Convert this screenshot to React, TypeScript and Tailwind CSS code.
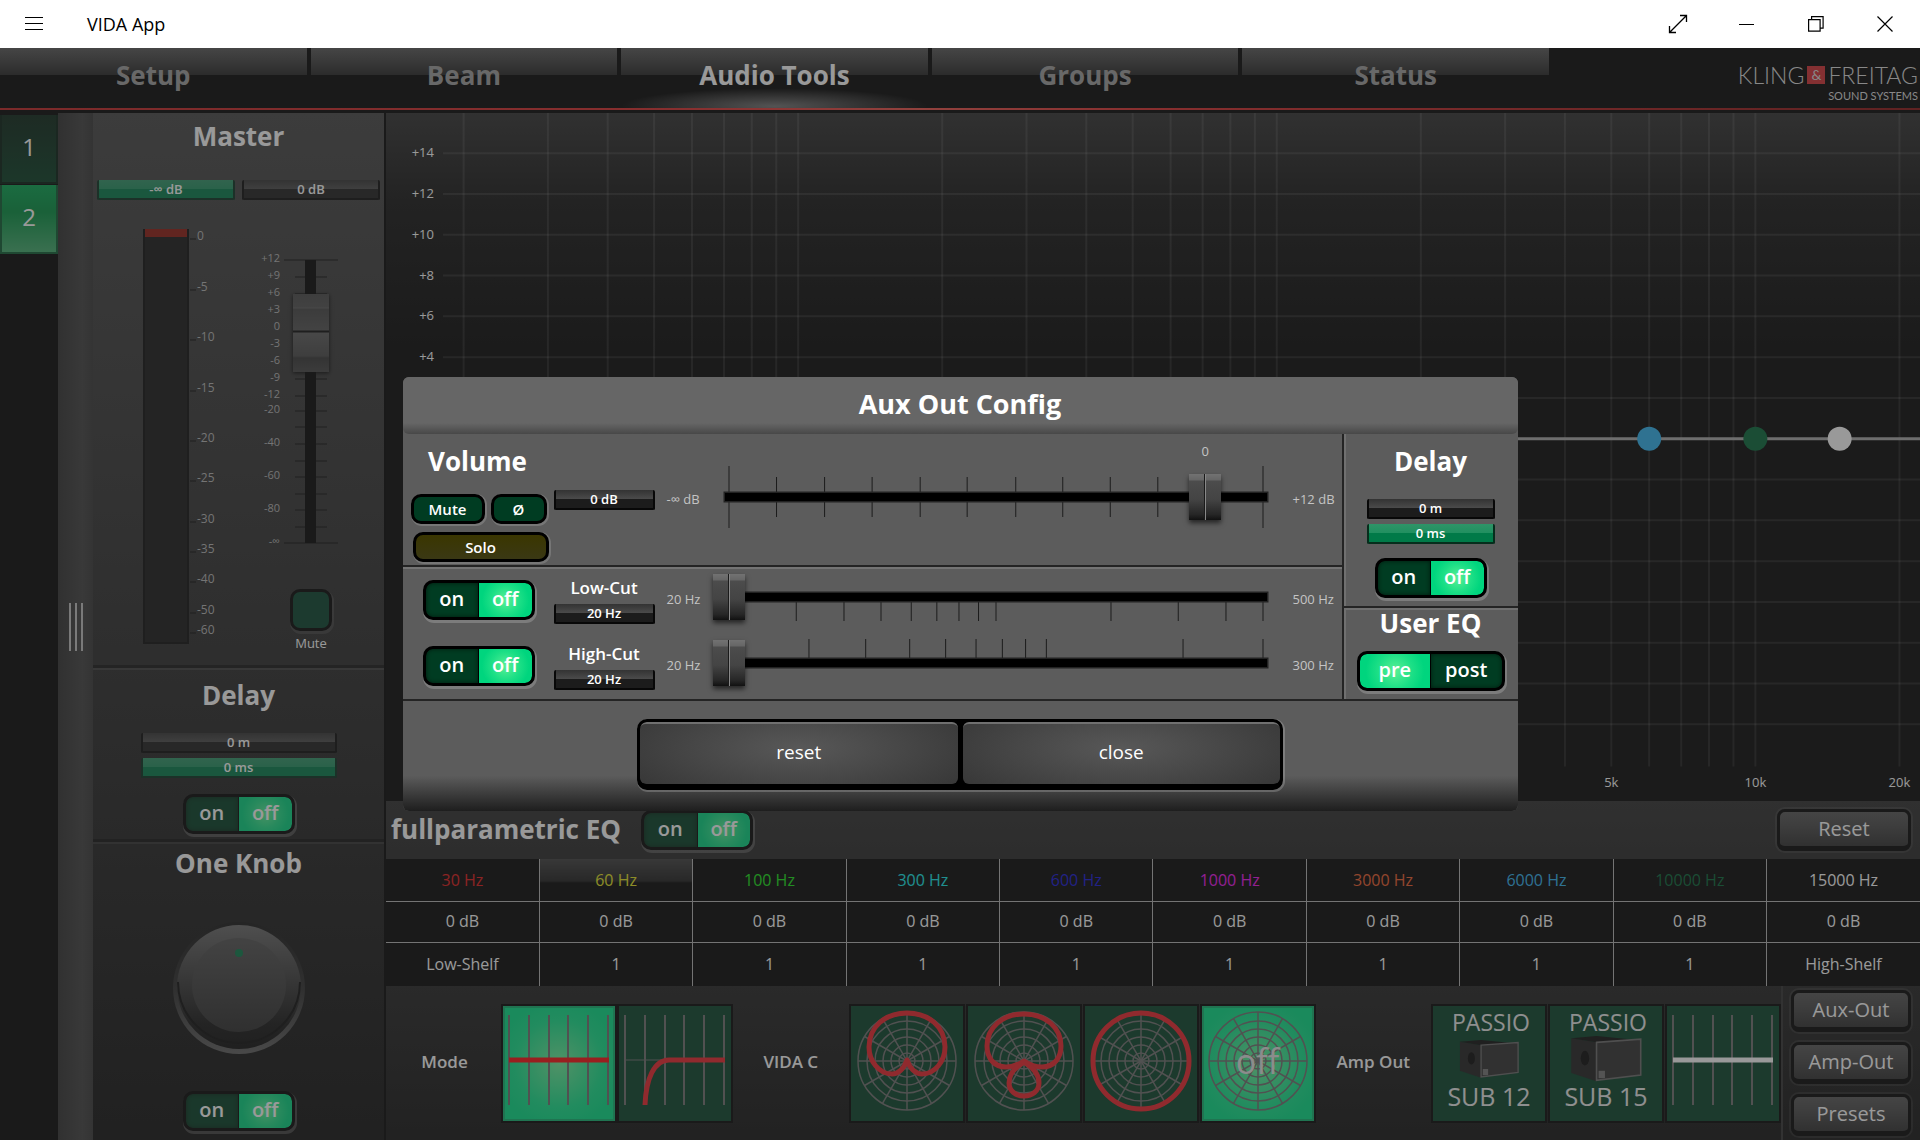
import React, { useState } from 'react';
import clsx from 'clsx';

const TABS = ['Setup', 'Beam', 'Audio Tools', 'Groups', 'Status'];

const BANDS = [
  { freq: '30 Hz', gain: '0 dB', q: 'Low-Shelf', color: 'text-[#e21414]' },
  { freq: '60 Hz', gain: '0 dB', q: '1', color: 'text-[#e4e41c]' },
  { freq: '100 Hz', gain: '0 dB', q: '1', color: 'text-[#12e412]' },
  { freq: '300 Hz', gain: '0 dB', q: '1', color: 'text-[#0ceaea]' },
  { freq: '600 Hz', gain: '0 dB', q: '1', color: 'text-[#1010d8]' },
  { freq: '1000 Hz', gain: '0 dB', q: '1', color: 'text-[#f00cf0]' },
  { freq: '3000 Hz', gain: '0 dB', q: '1', color: 'text-[#f05a28]' },
  { freq: '6000 Hz', gain: '0 dB', q: '1', color: 'text-[#2ab0ee]' },
  { freq: '10000 Hz', gain: '0 dB', q: '1', color: 'text-[#026636]' },
  { freq: '15000 Hz', gain: '0 dB', q: 'High-Shelf', color: 'text-white' },
];

const METER_SCALE: [string, number][] = [
  ['0', 7], ['-5', 58], ['-10', 108], ['-15', 159], ['-20', 209], ['-25', 249],
  ['-30', 290], ['-35', 320], ['-40', 350], ['-50', 381], ['-60', 401],
];

const FADER_SCALE: [string, number][] = [
  ['+12', 0], ['+9', 17], ['+6', 34], ['+3', 51], ['0', 68], ['-3', 85], ['-6', 102], ['-9', 119],
  ['-12', 136], ['-20', 151], ['', 167], ['-40', 184], ['', 201], ['-60', 217], ['', 234],
  ['-80', 250], ['', 267], ['-∞', 283],
];

/* ---------- small controls ---------- */

const Heading = ({ children }: { children: React.ReactNode }) => (
  <h2 className="pb-[2px] text-center text-[26px] leading-[30px] font-bold text-white">{children}</h2>
);

const Toggle = ({ options = ['on', 'off'], initial = 1, wide = false, label }: {
  options?: string[]; initial?: number; wide?: boolean; label: string;
}) => {
  const [active, setActive] = useState(initial);
  return (
    <div
      role="group"
      aria-label={label}
      className={clsx(
        'grid h-10 grid-cols-2 gap-px overflow-hidden rounded-[10px] border-[3px] border-black bg-black shadow-[1px_2px_0_1px_rgba(255,255,255,0.2)]',
        wide ? 'w-[148px]' : 'w-28'
      )}
    >
      {options.map((option, i) => (
        <button
          key={option}
          aria-pressed={i === active}
          onClick={() => setActive(i)}
          className={clsx(
            'flex items-center justify-center pb-[2px] text-xl leading-6 font-semibold text-white',
            i === 0 ? 'rounded-l-[7px]' : 'rounded-r-[7px]',
            i === active
              ? 'bg-[radial-gradient(circle,#5af094_0%,#1cdf86_45%,#00d57e_75%)]'
              : 'bg-[#003c22] shadow-[inset_0_0_4px_#001a0e]'
          )}
        >
          {option}
        </button>
      ))}
    </div>
  );
};

const ValueField = ({ value, label, green, className }: {
  value: string; label: string; green?: boolean; className?: string;
}) => (
  <input
    type="text"
    aria-label={label}
    defaultValue={value}
    className={clsx(
      'block h-5 rounded-[2px] border-x-2 border-b-2 text-center text-[13px] leading-4 font-semibold text-white outline-none',
      green
        ? 'border-[#052e1c] bg-[linear-gradient(#2f9468_0%,#219060_48%,#007a48_52%,#007a48_100%)]'
        : 'border-[#080808] bg-[linear-gradient(#333_0%,#4a4a4a_48%,#1c1c1c_52%,#1c1c1c_100%)]',
      className
    )}
  />
);

const SteelButton = ({ children }: { children: React.ReactNode }) => (
  <button className="h-[42px] w-full rounded-lg border-[3px] border-b-[5px] border-black bg-[linear-gradient(#565656,#484848_40%,#2e2e2e)] pb-px text-xl leading-6 text-white shadow-[0_0_0_2px_rgba(255,255,255,0.08)]">
    {children}
  </button>
);

const PillButton = ({ children, className }: { children: React.ReactNode; className?: string }) => (
  <button
    className={clsx(
      'flex h-[30px] items-center justify-center rounded-[10px] border-[3px] border-black pb-px text-[15px] leading-5 font-semibold text-white shadow-[1px_1px_0_1px_rgba(255,255,255,0.16)]',
      className
    )}
  >
    {children}
  </button>
);

const HSlider = ({ label, ticks, ends, side = 'both', value, mark }: {
  label: string; ticks: number[]; ends?: boolean; side?: 'both' | 'above' | 'below'; value: number; mark?: string;
}) => (
  <div className="mb-[6px] grid h-14 grid-cols-1">
    <svg className="col-start-1 row-start-1 mx-4 h-14 w-[calc(100%-32px)] overflow-visible" aria-hidden="true">
      {ticks.map((t, i) => {
        const end = ends && (i === 0 || i === ticks.length - 1);
        const reach = end ? 31 : 20;
        return (
          <line
            key={t}
            x1={`${t * 100}%`}
            x2={`${t * 100}%`}
            y1={side === 'below' ? 28 : side === 'above' ? 4 : 28 - reach}
            y2={side === 'above' ? 28 : side === 'below' ? 52 : 28 + reach}
            stroke="#1c1c1c"
          />
        );
      })}
      <line x1="0" x2="100%" y1="28" y2="28" stroke="#222" strokeWidth="11" strokeLinecap="square" />
      <line x1="0" x2="100%" y1="28" y2="28" stroke="#000" strokeWidth="8" strokeLinecap="square" />
      {mark && (
        <text x={`${value}%`} y="-13" textAnchor="middle" fontSize="13" fill="#c4c4c4">{mark}</text>
      )}
    </svg>
    <input
      type="range"
      min={0}
      max={100}
      step={0.1}
      defaultValue={value}
      aria-label={label}
      className="z-10 col-start-1 row-start-1 h-14 w-full cursor-pointer appearance-none bg-transparent [&::-webkit-slider-thumb]:h-[46px] [&::-webkit-slider-thumb]:w-8 [&::-webkit-slider-thumb]:appearance-none [&::-webkit-slider-thumb]:bg-[linear-gradient(90deg,transparent_0_15px,#1a1a1a_15px_16px,#888_16px_17px,transparent_17px),linear-gradient(#727272_0,#666_6px,#4c4c4c_7px,#444_55%,#262626_88%,#111)] [&::-webkit-slider-thumb]:shadow-[0_3px_5px_rgba(0,0,0,0.6)]"
    />
  </div>
);

/* ---------- window chrome ---------- */

const TitleBar = () => (
  <header className="flex h-12 shrink-0 items-center bg-white text-black">
    <button aria-label="Menu" className="flex h-full w-[68px] items-center justify-center">
      <svg width="18" height="16" stroke="currentColor" shapeRendering="crispEdges">
        <path d="M0 1.5h18M0 7.5h18M0 13.5h18" />
      </svg>
    </button>
    <h1 className="flex-1 pl-[19px] text-[18px] leading-6 font-normal">VIDA App</h1>
    <div className="flex h-full pr-px [&>button]:flex [&>button]:w-[69px] [&>button]:items-center [&>button]:justify-center">
      <button aria-label="Full screen">
        <svg width="20" height="20" fill="none" stroke="currentColor" strokeWidth="1.3">
          <path d="M1.5 18.5L18.5 1.5M12 1.5h6.5v6.5M1.5 12v6.5h6.5" />
        </svg>
      </button>
      <button aria-label="Minimize">
        <svg width="16" height="16" stroke="currentColor" shapeRendering="crispEdges"><path d="M0 8.5h15" /></svg>
      </button>
      <button aria-label="Restore">
        <svg width="16" height="16" fill="none" stroke="currentColor" strokeWidth="1.2">
          <path d="M.6 3.6h11.5v11.5H.6zM3.6 3.6V.6h11.5v11.5h-3" />
        </svg>
      </button>
      <button aria-label="Close">
        <svg width="16" height="16" stroke="currentColor" strokeWidth="1.2"><path d="M.5.5l15 15M15.5.5l-15 15" /></svg>
      </button>
    </div>
  </header>
);

const NavBar = () => (
  <nav className="relative flex h-[65px] shrink-0 items-start bg-black">
    <div className="grid h-[60px] flex-1 grid-cols-5 gap-1">
      {TABS.map((tab) => (
        <a
          key={tab}
          href="#"
          className={clsx(
            'flex items-center justify-center pb-[6px] text-[26px] leading-8 font-bold',
            tab === 'Audio Tools'
              ? 'bg-[radial-gradient(ellipse_50%_30%_at_50%_97%,#747474,transparent),linear-gradient(#585858,#242424_27px,transparent_27px)] text-white'
              : 'bg-[linear-gradient(#585858,#242424_27px,transparent_27px)] text-[#9c9c9c]'
          )}
        >
          {tab}
        </a>
      ))}
    </div>
    <div className="flex w-[371px] flex-col items-end pt-3 pr-[2px] font-['Lato','Open_Sans',sans-serif] text-[#dcdcdc]">
      <div className="flex items-center gap-[3px] text-[23px] leading-[30px] font-light">
        <span>KLING</span>
        <span className="flex h-[18px] w-[18px] items-center justify-center bg-[#d42c30] text-sm leading-4 font-normal">&amp;</span>
        <span>FREITAG</span>
      </div>
      <span className="text-[11px] leading-3">SOUND SYSTEMS</span>
    </div>
    <div className="absolute inset-x-0 top-[60px] h-[2px] bg-[linear-gradient(90deg,#c22020,#dc2a2a_35%,#f05048_48%,#dc2a2a_60%,#8a1010)]" />
  </nav>
);

/* ---------- left column ---------- */

const LevelMeter = () => (
  <svg width="76" height="416" className="overflow-visible" role="img" aria-label="Level meter">
    <rect x="1" y="1" width="44" height="413" fill="#141414" stroke="#0a0a0a" strokeWidth="2" />
    <rect x="2" y="0" width="42" height="8" fill="#8e160c" />
    {METER_SCALE.map(([text, y]) => (
      <g key={text}>
        <line x1="47" x2="53" y1={y + 3} y2={y + 3} stroke="#0a0a0a" />
        <text x="54" y={y + 4} fontSize="12" fill="#b4b4b4">{text}</text>
      </g>
    ))}
  </svg>
);

const MasterFader = () => (
  <div className="grid h-[364px] w-[84px] grid-cols-1">
    <svg className="col-start-1 row-start-1 h-full w-full overflow-visible" aria-hidden="true">
      {FADER_SCALE.map(([text, y], i) => {
        const reach = i === 0 || i === FADER_SCALE.length - 1 ? 27 : 16;
        return (
          <g key={y}>
            <line x1={56 - reach} x2={56 + reach} y1={y + 40} y2={y + 40} stroke="#0c0c0c" />
            <text x="25" y={y + 42} textAnchor="end" fontSize="11" fill="#b4b4b4">{text}</text>
          </g>
        );
      })}
      <rect x="50" y="40" width="11" height="283" fill="#000" />
    </svg>
    <input
      type="range"
      min={0}
      max={100}
      defaultValue={74}
      aria-label="Master volume"
      className="col-start-1 row-start-1 ml-[38px] h-full w-9 cursor-pointer appearance-none bg-transparent [direction:rtl] [writing-mode:vertical-lr] [&::-webkit-slider-thumb]:h-[78px] [&::-webkit-slider-thumb]:w-9 [&::-webkit-slider-thumb]:appearance-none [&::-webkit-slider-thumb]:bg-[linear-gradient(#484848_0,#505050_13px,#5e5e5e_14px,#444_15px,#525252_36px,#0a0a0a_37px,#0a0a0a_38px,#5c5c5c_39px,#484848_62px,#343434_64px,#444_78px)] [&::-webkit-slider-thumb]:shadow-[0_1px_4px_#000]"
    />
  </div>
);

const Knob = () => (
  <svg width="136" height="136" viewBox="-68 -68 136 136" role="img" aria-label="One Knob">
    <defs>
      <linearGradient id="rim" x1="0" y1="0" x2="0" y2="1">
        <stop offset="0" stopColor="#161616" />
        <stop offset="0.5" stopColor="#2c2c2c" />
        <stop offset="1" stopColor="#5e5e5e" />
      </linearGradient>
      <linearGradient id="skirt" x1="0" y1="0" x2="0" y2="1">
        <stop offset="0" stopColor="#6a6a6a" />
        <stop offset="0.45" stopColor="#3a3a3a" />
        <stop offset="0.8" stopColor="#141414" />
        <stop offset="1" stopColor="#0c0c0c" />
      </linearGradient>
      <linearGradient id="cap" x1="0" y1="0" x2="0" y2="1">
        <stop offset="0" stopColor="#525252" />
        <stop offset="1" stopColor="#2c2c2c" />
      </linearGradient>
    </defs>
    <circle r="66" fill="url(#rim)" />
    <circle cy="-1" r="62" fill="url(#skirt)" />
    <path d="M-61 -6A61 61 0 0 0 61 -6" fill="none" stroke="#0a0a0a" strokeWidth="2" />
    <circle cy="-3" r="47" fill="url(#cap)" />
    <circle cy="-35" r="4" fill="#067a48" />
  </svg>
);

const Sidebar = () => (
  <aside className="flex w-[293px] shrink-0 flex-col border-r-2 border-black bg-[linear-gradient(#444,#323232_35%,#222_65%,#0e0e0e)]">
    <section className="flex flex-1 flex-col border-b-[3px] border-[#141414] shadow-[0_2px_0_#3c3c3c]">
      <div className="pt-2"><Heading>Master</Heading></div>
      <div className="flex gap-[7px] px-1 pt-[27px]">
        <ValueField value="-∞ dB" label="Master level" green className="w-full" />
        <ValueField value="0 dB" label="Master gain" className="w-full" />
      </div>
      <div className="flex gap-9 pt-[29px] pl-[50px]">
        <LevelMeter />
        <div className="flex flex-col items-start">
          <div className="-mt-[9px]"><MasterFader /></div>
          <div className="flex w-[112px] flex-col items-center gap-1 pt-[5px]">
            <button
              aria-labelledby="master-mute"
              className="h-[42px] w-[42px] rounded-[10px] border-[3px] border-black bg-[#04402a] shadow-[1px_2px_0_1px_rgba(255,255,255,0.1)]"
            />
            <span id="master-mute" className="text-[13px] leading-4 text-white">Mute</span>
          </div>
        </div>
      </div>
    </section>
    <section className="flex h-[174px] flex-col items-center border-b-[3px] border-[#101010] pt-3 shadow-[0_2px_0_#303030]">
      <Heading>Delay</Heading>
      <div className="flex flex-col gap-[5px] pt-[21px] pb-4">
        <ValueField value="0 m" label="Delay distance" className="w-[196px]" />
        <ValueField value="0 ms" label="Delay time" green className="w-[196px]" />
      </div>
      <Toggle label="Delay" />
    </section>
    <section className="flex h-[298px] flex-col items-center pt-[6px]">
      <Heading>One Knob</Heading>
      <div className="pt-10 pb-[35px]"><Knob /></div>
      <Toggle label="One Knob" />
    </section>
  </aside>
);

/* ---------- EQ graph ---------- */

// 20 Hz sits at 5.06 % of the width, one decade takes 31.2 %
const freqX = (hz: number) => 5.06 + 31.2 * Math.log10(hz / 20);
const gainY = (db: number) => 47.35 - 2.965 * db;

const GRID_FREQS = [
  20, 30, 40, 50, 60, 70, 80, 90, 100, 200, 300, 400, 500, 600, 700, 800, 900,
  1000, 2000, 3000, 4000, 5000, 6000, 7000, 8000, 9000, 10000, 20000,
];
const GRID_GAINS = [14, 12, 10, 8, 6, 4, 2, 0, -2, -4, -6, -8, -10, -12, -14];

const EqGraph = () => (
  <div className="min-h-0 flex-1 bg-[linear-gradient(#2e2e2e,#121212_13%,#020202_35%)]">
    <svg className="block h-full w-full" role="img" aria-label="EQ curve">
      {GRID_FREQS.map((hz) => (
        <line key={hz} x1={`${freqX(hz)}%`} x2={`${freqX(hz)}%`} y1="0" y2="95%" stroke="#fff" strokeOpacity="0.1" strokeWidth="2" />
      ))}
      {GRID_GAINS.map((db) => (
        <line key={db} x1="57" x2="100%" y1={`${gainY(db)}%`} y2={`${gainY(db)}%`} stroke="#fff" strokeOpacity="0.1" strokeWidth="2" />
      ))}
      {[14, 12, 10, 8, 6, 4].map((db) => (
        <text key={db} x="48" y={`${gainY(db)}%`} dy="4" textAnchor="end" fontSize="13" fill="#fff">{`+${db}`}</text>
      ))}
      <line x1="57" x2="100%" y1={`${gainY(0)}%`} y2={`${gainY(0)}%`} stroke="#a8a8a8" strokeWidth="3" />
      <circle cx={`${freqX(6000)}%`} cy={`${gainY(0)}%`} r="12" fill="#2ab0ee" />
      <circle cx={`${freqX(10000)}%`} cy={`${gainY(0)}%`} r="12" fill="#026636" />
      <circle cx={`${freqX(15000)}%`} cy={`${gainY(0)}%`} r="12" fill="#fff" />
      {[5, 10, 20].map((k) => (
        <text key={k} x={`${freqX(k * 1000)}%`} y="98%" textAnchor="middle" fontSize="13" fill="#fff">{`${k}k`}</text>
      ))}
    </svg>
  </div>
);

const BandTable = () => (
  <table className="w-full table-fixed border-collapse bg-black text-base leading-5 text-white">
    <thead>
      <tr className="h-[42px]">
        {BANDS.map((band, i) => (
          <th
            key={band.freq}
            scope="col"
            className={clsx(
              'border-r border-b border-[#b4b4b4] font-normal last:border-r-0',
              band.color,
              i === 1 && 'bg-[linear-gradient(#3c3c3c,#1c1c1c_22px,#000_24px)]'
            )}
          >
            {band.freq}
          </th>
        ))}
      </tr>
    </thead>
    <tbody>
      <tr className="h-[41px]">
        {BANDS.map((band) => (
          <td key={band.freq} className="border-r border-b border-[#b4b4b4] pb-[2px] text-center last:border-r-0">{band.gain}</td>
        ))}
      </tr>
      <tr className="h-11">
        {BANDS.map((band) => (
          <td key={band.freq} className="border-r border-[#b4b4b4] text-center last:border-r-0">{band.q}</td>
        ))}
      </tr>
    </tbody>
  </table>
);

/* ---------- mode tiles ---------- */

const Tile = ({ label, active, children }: { label: string; active?: boolean; children: React.ReactNode }) => (
  <button
    aria-label={label}
    aria-pressed={!!active}
    className={clsx(
      'flex h-[115px] w-28 flex-col items-center justify-center pb-1 shadow-[0_0_0_2px_#000]',
      active
        ? 'bg-[radial-gradient(circle,#6cf09a_0%,#10e48a_55%,#00e084_80%)] ring-2 ring-[#0cb46e] ring-inset'
        : 'bg-[#044026]'
    )}
  >
    {children}
  </button>
);

const GridLines = ({ curve, color, width = 5 }: { curve: string; color: string; width?: number }) => (
  <svg width="108" height="108" viewBox="0 0 108 108" fill="none">
    {[4, 24, 44, 63, 83, 103].map((x) => (
      <line key={x} x1={x} x2={x} y1="8" y2="98" stroke="#6e6e6e" strokeWidth="2" />
    ))}
    <line x1="4" x2="104" y1="53" y2="53" stroke="#6e6e6e" />
    <path d={curve} stroke={color} strokeWidth={width} />
  </svg>
);

const Polar = ({ paths = [], circle }: { paths?: string[]; circle?: boolean }) => (
  <svg width="108" height="108" viewBox="-54 -54 108 108" fill="none" className="col-start-1 row-start-1">
    {[8, 16, 24, 32, 40, 49].map((r) => (
      <circle key={r} r={r} stroke="#6e6e6e" strokeWidth="1.5" />
    ))}
    {[0, 30, 60, 90, 120, 150].map((deg) => (
      <line key={deg} x1="-49" x2="49" transform={`rotate(${deg})`} stroke="#6e6e6e" strokeWidth="1.5" />
    ))}
    {paths.map((d) => (
      <path key={d} d={d} stroke="#ec2028" strokeWidth="5" strokeLinejoin="round" />
    ))}
    {circle && <circle r="48" stroke="#ec2028" strokeWidth="5" />}
  </svg>
);

const CARDIOID = ['M0 -1C-3 8 -9 13 -15 13C-28 13 -38 0 -38 -14C-38 -34 -22 -48 0 -48C22 -48 38 -34 38 -14C38 0 28 13 15 13C9 13 3 8 0 -1Z'];
const HYPER = [
  'M0 0C-6 4 -12 6 -18 6C-30 6 -37 -3 -37 -15C-37 -33 -22 -47 0 -47C22 -47 37 -33 37 -15C37 -3 30 6 18 6C12 6 6 4 0 0Z',
  'M0 1C-10 7 -15 14 -15 22C-15 30 -8 35 0 35C8 35 15 30 15 22C15 14 10 7 0 1Z',
];

const SubIcon = ({ size }: { size: number }) => (
  <svg width={size} height={size * 0.64} viewBox="0 0 70 45">
    <path d="M2 3L26 7V44L2 36Z" fill="#1e1e1e" />
    <path d="M2 3L26 1L67 5L26 7Z" fill="#0c0c0c" />
    <path d="M26 7L68 4V38L26 43Z" fill="#2e2e2e" stroke="#6a6a6a" strokeWidth="1.5" />
    <ellipse cx="15" cy="22" rx="4" ry="7" fill="#060606" />
    <rect x="28" y="34" width="6" height="7" fill="#747474" />
  </svg>
);

const SubTile = ({ model, size }: { model: string; size: number }) => (
  <Tile label={`PASSIO ${model}`}>
    <span className="pl-1 text-[23px] leading-7 text-[#eaeaea]">PASSIO</span>
    <span className="flex h-[46px] items-center"><SubIcon size={size} /></span>
    <span className="pb-1 text-[25px] leading-7 text-[#eaeaea]">{model}</span>
  </Tile>
);

const ModeLabel = ({ children, className = 'flex-1' }: { children: React.ReactNode; className?: string }) => (
  <span className={clsx('pb-[2px] text-center text-[17px] leading-5 font-semibold text-white', className)}>{children}</span>
);

const ModeRow = () => (
  <div className="flex h-[154px] bg-[linear-gradient(#202020,#101010)]">
    <div className="flex flex-1 items-center">
      <ModeLabel className="w-[117px]">Mode</ModeLabel>
      <div className="flex gap-1">
        <Tile label="Flat" active><GridLines curve="M4 53H104" color="#ff0a0a" /></Tile>
        <Tile label="High pass"><GridLines curve="M24 98C25 72 33 53 48 53H104" color="#ec2028" /></Tile>
      </div>
      <ModeLabel>VIDA C</ModeLabel>
      <div className="flex gap-[5px]">
        <Tile label="Cardioid"><Polar paths={CARDIOID} /></Tile>
        <Tile label="Hypercardioid"><Polar paths={HYPER} /></Tile>
        <Tile label="Omni"><Polar circle /></Tile>
        <Tile label="VIDA C off" active>
          <span className="grid place-items-center">
            <Polar />
            <span className="col-start-1 row-start-1 text-[34px] leading-9 text-[#e4e4e4]">off</span>
          </span>
        </Tile>
      </div>
      <ModeLabel>Amp Out</ModeLabel>
      <div className="flex gap-[5px]">
        <SubTile model="SUB 12" size={62} />
        <SubTile model="SUB 15" size={74} />
        <Tile label="Amp out flat"><GridLines curve="M4 53H104" color="#fff" /></Tile>
      </div>
    </div>
    <div className="ml-[2px] flex w-[139px] flex-col justify-between border-l-2 border-[#303030] py-1 pr-[9px] pl-2">
      <SteelButton>Aux-Out</SteelButton>
      <SteelButton>Amp-Out</SteelButton>
      <SteelButton>Presets</SteelButton>
    </div>
  </div>
);

/* ---------- dialog ---------- */

const logTicks = (max: number) =>
  [30, 40, 50, 60, 70, 80, 90, 100, 200, 300, 400, 500]
    .filter((hz) => hz <= max)
    .map((hz) => Math.log(hz / 20) / Math.log(max / 20));

const VOLUME_TICKS = [0, 0.089, 0.179, 0.268, 0.358, 0.446, 0.537, 0.625, 0.714, 0.803, 0.892, 1];

const ROW = 'grid grid-cols-[151px_101px_58px_1fr_63px] items-center';
const SCALE_TEXT = 'mb-[3px] text-[13px] leading-5 text-[#c4c4c4]';

const CutRow = ({ name, max, side }: { name: string; max: number; side: 'above' | 'below' }) => (
  <div className={clsx(ROW, 'h-[66px]')}>
    <div className="pl-5"><Toggle label={name} /></div>
    <div className="flex flex-col items-center gap-[6px] pt-[2px]">
      <span className="text-[17px] leading-5 font-semibold text-white">{name}</span>
      <ValueField value="20 Hz" label={`${name} frequency`} className="w-full" />
    </div>
    <span className={clsx(SCALE_TEXT, 'pl-3')}>20 Hz</span>
    <HSlider label={name} ticks={logTicks(max)} side={side} value={0} />
    <span className={clsx(SCALE_TEXT, 'pl-[14px]')}>{max} Hz</span>
  </div>
);

const AuxOutDialog = () => (
  <div role="dialog" aria-label="Aux Out Config" className="flex w-[1115px] flex-col overflow-hidden rounded-md bg-[#5c5c5c]">
    <div className="flex h-[57px] items-center justify-center rounded-b-md bg-[linear-gradient(#666,#666_46px,#484848)] pb-1">
      <h2 className="text-[27px] leading-8 font-bold text-white">Aux Out Config</h2>
    </div>
    <div className="grid grid-cols-[1fr_174px] border-b-2 border-[#242424] shadow-[0_2px_0_#747474]">
      <div className="border-r-2 border-[#242424]">
        <div className={clsx(ROW, 'h-[133px] border-b-2 border-[#242424] shadow-[0_2px_0_#747474]')}>
          <div className="pt-3 pl-2">
            <div className="w-[134px]"><Heading>Volume</Heading></div>
            <div className="flex gap-[6px] pt-4">
              <PillButton className="w-[74px] bg-[#003c22]">Mute</PillButton>
              <PillButton className="w-[56px] bg-[#003c22]">Ø</PillButton>
            </div>
            <div className="pt-2 pb-1 pl-[2px]">
              <PillButton className="w-[136px] bg-[linear-gradient(#3a3600,#3a3814)]">Solo</PillButton>
            </div>
          </div>
          <ValueField value="0 dB" label="Volume" className="w-full" />
          <span className={clsx(SCALE_TEXT, 'pl-3')}>-∞ dB</span>
          <HSlider label="Volume" ticks={VOLUME_TICKS} ends value={89.2} mark="0" />
          <span className={clsx(SCALE_TEXT, 'pl-[14px]')}>+12 dB</span>
        </div>
        <CutRow name="Low-Cut" max={500} side="below" />
        <CutRow name="High-Cut" max={300} side="above" />
      </div>
      <div className="flex flex-col shadow-[inset_2px_0_0_#707070]">
        <div className="flex h-[174px] flex-col items-center border-b-2 border-[#242424] pt-3">
          <Heading>Delay</Heading>
          <div className="flex flex-col gap-[5px] pt-[21px] pb-[14px]">
            <ValueField value="0 m" label="Aux delay distance" className="w-[128px]" />
            <ValueField value="0 ms" label="Aux delay time" green className="w-[128px]" />
          </div>
          <Toggle label="Aux delay" />
        </div>
        <div className="flex flex-1 flex-col items-center gap-[11px] border-t-2 border-[#707070]">
          <div className="-mt-[2px]"><Heading>User EQ</Heading></div>
          <Toggle label="User EQ" options={['pre', 'post']} initial={0} wide />
        </div>
      </div>
    </div>
    <div className="flex h-[110px] justify-center bg-[linear-gradient(#5c5c5c_68%,#1e1e1e)] pt-[18px]">
      <div className="grid h-[71px] w-[646px] grid-cols-2 gap-[5px] overflow-hidden rounded-[10px] border-[3px] border-b-[6px] border-black bg-black shadow-[1px_1px_0_1px_rgba(255,255,255,0.2)]">
        {['reset', 'close'].map((name) => (
          <button
            key={name}
            className="rounded-md border-t-2 border-[#707070] bg-[radial-gradient(ellipse_80%_130%_at_50%_40%,#585858,#2e2e2e)] pb-1 text-[19px] leading-6 text-white"
          >
            {name}
          </button>
        ))}
      </div>
    </div>
  </div>
);

export default function App() {
  const [channel, setChannel] = useState(2);

  return (
    <div className="flex min-h-screen flex-col bg-black font-['Open_Sans','Noto_Sans',sans-serif]">
      <TitleBar />
      <div className="relative flex flex-1 flex-col">
        <NavBar />
        <div className="flex flex-1">
          <div className="flex w-[58px] shrink-0 flex-col gap-px pt-[2px]">
            {[1, 2].map((n) => (
              <button
                key={n}
                aria-pressed={n === channel}
                onClick={() => setChannel(n)}
                className={clsx(
                  'h-[69px] border-x-2 border-b-2 pb-1 text-2xl text-white',
                  n === channel
                    ? 'border-[#0a5c30] bg-[linear-gradient(#02a44e,#008e3e_40%,#40ac6c)]'
                    : 'border-[#021a0e] bg-[linear-gradient(#082214,#043a20)]'
                )}
              >
                {n}
              </button>
            ))}
          </div>
          <div className="flex w-[35px] shrink-0 items-center justify-center gap-1 bg-[linear-gradient(90deg,#2e2e2e,#3e3e3e_70%,#343434)]">
            <i className="h-12 w-[2px] bg-[#c0c0c0]" />
            <i className="h-12 w-[2px] bg-[#c0c0c0]" />
            <i className="h-12 w-[2px] bg-[#c0c0c0]" />
          </div>
          <Sidebar />
          <main className="flex min-w-0 flex-1 flex-col">
            <EqGraph />
            <div className="flex h-[58px] items-center gap-5 bg-[linear-gradient(#2c2c2c,#262626)] pr-[9px] pl-[5px]">
              <Heading>fullparametric EQ</Heading>
              <Toggle label="fullparametric EQ" />
              <div className="ml-auto w-[134px]"><SteelButton>Reset</SteelButton></div>
            </div>
            <BandTable />
            <ModeRow />
          </main>
        </div>
        <div className="absolute inset-0 flex items-center justify-center bg-[#343434]/50">
          <AuxOutDialog />
        </div>
      </div>
    </div>
  );
}
